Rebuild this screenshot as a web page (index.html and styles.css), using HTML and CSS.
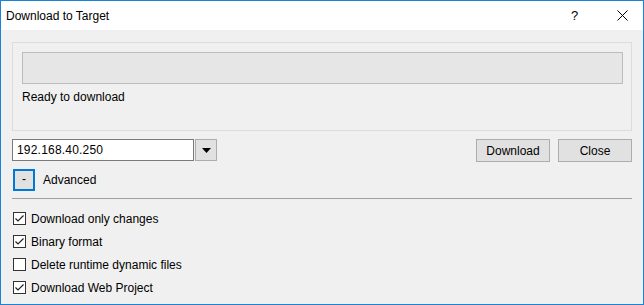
FILE: index.html
```html
<!DOCTYPE html>
<html>
<head>
<meta charset="utf-8">
<link rel="stylesheet" href="styles.css">
</head>
<body>
<div class="window">
  <div class="titlebar">
    <span class="title">Download to Target</span>
    <span class="help">?</span>
    <span class="close-x">
      <svg width="11" height="11" viewBox="0 0 11 11"><path d="M0.5 0.5 L10.5 10.5 M10.5 0.5 L0.5 10.5" stroke="#000" stroke-width="1" fill="none"/></svg>
    </span>
  </div>
  <div class="content">
    <div class="group">
      <div class="progress"></div>
      <div class="status">Ready to download</div>
    </div>
    <div class="row-target">
      <div class="combo">
        <div class="combo-input">192.168.40.250</div>
        <div class="combo-btn">
          <svg width="9" height="5" viewBox="0 0 9 5"><path d="M0 0 H9 L4.5 5 Z" fill="#000"/></svg>
        </div>
      </div>
      <div class="actions">
        <button class="btn">Download</button>
        <button class="btn">Close</button>
      </div>
    </div>
    <div class="row-adv">
      <button class="toggle">-</button>
      <span class="adv-label">Advanced</span>
    </div>
    <div class="separator"></div>
    <div class="options">
      <label class="opt"><span class="box checked"><svg width="11" height="11" viewBox="0 0 11 11"><path d="M1.5 5.5 L4 8 L9.5 2.5" stroke="#222" stroke-width="1.2" fill="none"/></svg></span>Download only changes</label>
      <label class="opt"><span class="box checked"><svg width="11" height="11" viewBox="0 0 11 11"><path d="M1.5 5.5 L4 8 L9.5 2.5" stroke="#222" stroke-width="1.2" fill="none"/></svg></span>Binary format</label>
      <label class="opt"><span class="box"></span>Delete runtime dynamic files</label>
      <label class="opt"><span class="box checked"><svg width="11" height="11" viewBox="0 0 11 11"><path d="M1.5 5.5 L4 8 L9.5 2.5" stroke="#222" stroke-width="1.2" fill="none"/></svg></span>Download Web Project</label>
    </div>
  </div>
</div>
</body>
</html>
```
FILE: styles.css
```css
html, body {
  margin: 0;
  padding: 0;
  background: #f0f0f0;
}
body {
  font-family: "Liberation Sans", Arial, sans-serif;
  font-size: 12px;
  color: #000;
}
.window {
  width: 644px;
  height: 305px;
  box-sizing: border-box;
  border: 1px solid #1883d7;
  display: flex;
  flex-direction: column;
  background: #f0f0f0;
  overflow: hidden;
}
.titlebar {
  height: 29px;
  background: #fff;
  display: flex;
  align-items: center;
  padding-left: 5px;
  flex: none;
}
.title {
  flex: 1;
  font-size: 12px;
}
.help {
  width: 10px;
  font-size: 13px;
  margin-right: 36px;
}
.close-x {
  display: flex;
  margin-right: 15px;
}
.content {
  flex: 1;
  padding: 12px 11px 0 11px;
  display: flex;
  flex-direction: column;
}
.group {
  border: 1px solid #dcdcdc;
  padding: 9px 8px 0 9px;
  box-sizing: content-box;
  height: 78px;
}
.progress {
  height: 30px;
  border: 1px solid #bcbcbc;
  background: #e6e6e6;
}
.status {
  margin-top: 6px;
  line-height: 14px;
}
.row-target {
  margin-top: 8px;
  display: flex;
  align-items: flex-start;
  justify-content: space-between;
}
.combo {
  display: flex;
  gap: 1px;
}
.combo-input {
  width: 176px;
  height: 20px;
  border: 1px solid #7a7a7a;
  background: #fff;
  line-height: 20px;
  padding-left: 4px;
  letter-spacing: 0.2px;
}
.combo-btn {
  width: 20px;
  height: 20px;
  border: 1px solid #adadad;
  background: #e1e1e1;
  display: flex;
  align-items: center;
  justify-content: center;
}
.actions {
  display: flex;
  gap: 8px;
}
.btn {
  width: 74px;
  height: 23px;
  border: 1px solid #adadad;
  background: #e1e1e1;
  font-family: inherit;
  font-size: 12px;
  color: #000;
  padding: 0;
  margin: 0;
}
.row-adv {
  margin-top: 7px;
  display: flex;
  align-items: center;
  padding-left: 1px;
}
.toggle {
  width: 22px;
  height: 22px;
  box-sizing: border-box;
  border: 2px solid #0078d7;
  background: #e1e1e1;
  font-family: inherit;
  font-size: 12px;
  padding: 0 0 2px 0;
  margin: 0;
  line-height: 1;
}
.adv-label {
  margin-left: 8px;
}
.separator {
  margin-top: 7px;
  height: 1px;
  background: #a0a0a0;
  width: 620px;
}
.options {
  margin-top: 8px;
  display: flex;
  flex-direction: column;
}
.opt {
  display: flex;
  align-items: center;
  height: 23px;
}
.box {
  width: 11px;
  height: 11px;
  border: 1px solid #333;
  background: #fff;
  margin-left: 1px;
  margin-right: 5px;
  display: flex;
  align-items: center;
  justify-content: center;
}
```
